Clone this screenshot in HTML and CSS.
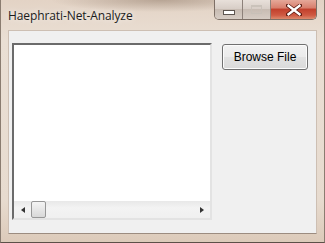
FILE: index.html
```html
<!DOCTYPE html>
<html>
<head>
<meta charset="utf-8">
<link rel="stylesheet" href="styles.css">
</head>
<body>
<div class="window">
  <div class="titlebar">
    <div class="title">Haephrati-Net-Analyze</div>
    <div class="caption-buttons">
      <div class="cbtn min"><span class="min-glyph"></span></div>
      <div class="cbtn max"><span class="max-glyph"></span></div>
      <div class="cbtn close">
        <svg width="16" height="12" viewBox="0 0 16 12"><path d="M2 1.5 L14 10.5 M14 1.5 L2 10.5" stroke="#5a1a10" stroke-width="4" stroke-linecap="square"/><path d="M2.5 1.8 L13.5 10.2 M13.5 1.8 L2.5 10.2" stroke="#ffffff" stroke-width="2.4" stroke-linecap="square"/></svg>
      </div>
    </div>
  </div>
  <div class="client">
    <div class="listbox">
      <div class="list-area"></div>
      <div class="hscroll">
        <div class="arrow left"></div>
        <div class="thumb"></div>
        <div class="track"></div>
        <div class="arrow right"></div>
      </div>
    </div>
    <button class="browse">Browse File</button>
  </div>
</div>
</body>
</html>
```
FILE: styles.css
```css
html, body {
  margin: 0;
  padding: 0;
  width: 325px;
  height: 243px;
  overflow: hidden;
  background: #d9c9bb;
}
.window {
  width: 325px;
  height: 243px;
  box-sizing: border-box;
  display: flex;
  flex-direction: column;
  background:
    radial-gradient(ellipse 110px 12px at 160px 0px, rgba(140,118,100,0.5), rgba(140,118,100,0) 100%),
    linear-gradient(180deg, #e3d3c5 0px, #eadfd4 40px, #e7dbcf 200px, #dccab9 243px);
  border-left: 1px solid #8a7c70;
  border-right: 1px solid #8a7c70;
  border-bottom: 1px solid #5c5048;
}
.titlebar {
  height: 30px;
  display: flex;
  align-items: flex-start;
  justify-content: space-between;
  flex: none;
}
.title {
  font-family: "Open Sans", "Liberation Sans", sans-serif;
  font-size: 12px;
  color: #1b1b1b;
  padding: 7px 0 0 7px;
  letter-spacing: -0.1px;
  text-shadow: 0 0 6px rgba(255,255,255,0.9);
}
.caption-buttons {
  display: flex;
  margin-right: 7px;
  height: 19px;
  border: 1px solid #7d6f66;
  border-top: none;
  border-radius: 0 0 5px 5px;
  overflow: hidden;
}
.cbtn {
  display: flex;
  align-items: center;
  justify-content: center;
  height: 19px;
}
.min, .max {
  width: 27px;
  background: linear-gradient(180deg, #e8e0da 0%, #d8cec7 45%, #c8bcb3 50%, #d6ccc4 100%);
  border-right: 1px solid #8d817a;
}
.min-glyph {
  width: 10px;
  height: 3px;
  background: #fff;
  border: 1px solid #5d5550;
  margin-top: 5px;
}
.max-glyph {
  width: 9px;
  height: 6px;
  border: 1px solid #c8c0b8;
  border-top-width: 2px;
  opacity: 0.9;
}
.close {
  width: 45px;
  background: linear-gradient(180deg, #e5a899 0%, #d8806e 40%, #c2412d 50%, #cf5a43 80%, #dd8a6d 100%);
}
.client {
  margin: 0 7px 0 7px;
  height: 204px;
  background: #f0f0f0;
  border: 1px solid #cdbfb3;
  border-bottom-color: #9c8c80;
  display: flex;
  align-items: flex-start;
  padding: 12px 0 0 3px;
  box-sizing: border-box;
  flex: none;
}
.listbox {
  width: 200px;
  height: 177px;
  box-sizing: border-box;
  border-top: 2px solid #6b6b6b;
  border-left: 2px solid #6b6b6b;
  border-right: 2px solid #e3e3e3;
  border-bottom: 2px solid #e3e3e3;
  background: #fff;
  display: flex;
  flex-direction: column;
}
.list-area {
  flex: 1;
}
.hscroll {
  height: 17px;
  display: flex;
  align-items: stretch;
  background: linear-gradient(180deg, #e8e8e8, #f3f3f3 40%, #f0f0f0);
}
.arrow {
  width: 17px;
  display: flex;
  align-items: center;
  justify-content: center;
}
.arrow::before {
  content: "";
  width: 0;
  height: 0;
  border-top: 3.5px solid transparent;
  border-bottom: 3.5px solid transparent;
}
.arrow.left::before {
  border-right: 4px solid #333;
}
.arrow.right::before {
  border-left: 4px solid #333;
}
.thumb {
  width: 15px;
  box-sizing: border-box;
  border: 1px solid #979797;
  border-radius: 2px;
  background: linear-gradient(180deg, #f4f4f4, #e6e6e6 50%, #d8d8d8);
}
.track {
  flex: 1;
}
.browse {
  margin-left: 10px;
  margin-top: 1px;
  width: 86px;
  height: 26px;
  box-sizing: border-box;
  border: 1px solid #707070;
  border-radius: 3px;
  background: linear-gradient(180deg, #f2f2f2 0%, #ebebeb 50%, #e2e2e2 52%, #dadada 100%);
  box-shadow: inset 0 0 0 1px #fcfcfc;
  font-family: "Liberation Sans", Arial, sans-serif;
  font-size: 12px;
  color: #000;
  padding: 0;
}
```
